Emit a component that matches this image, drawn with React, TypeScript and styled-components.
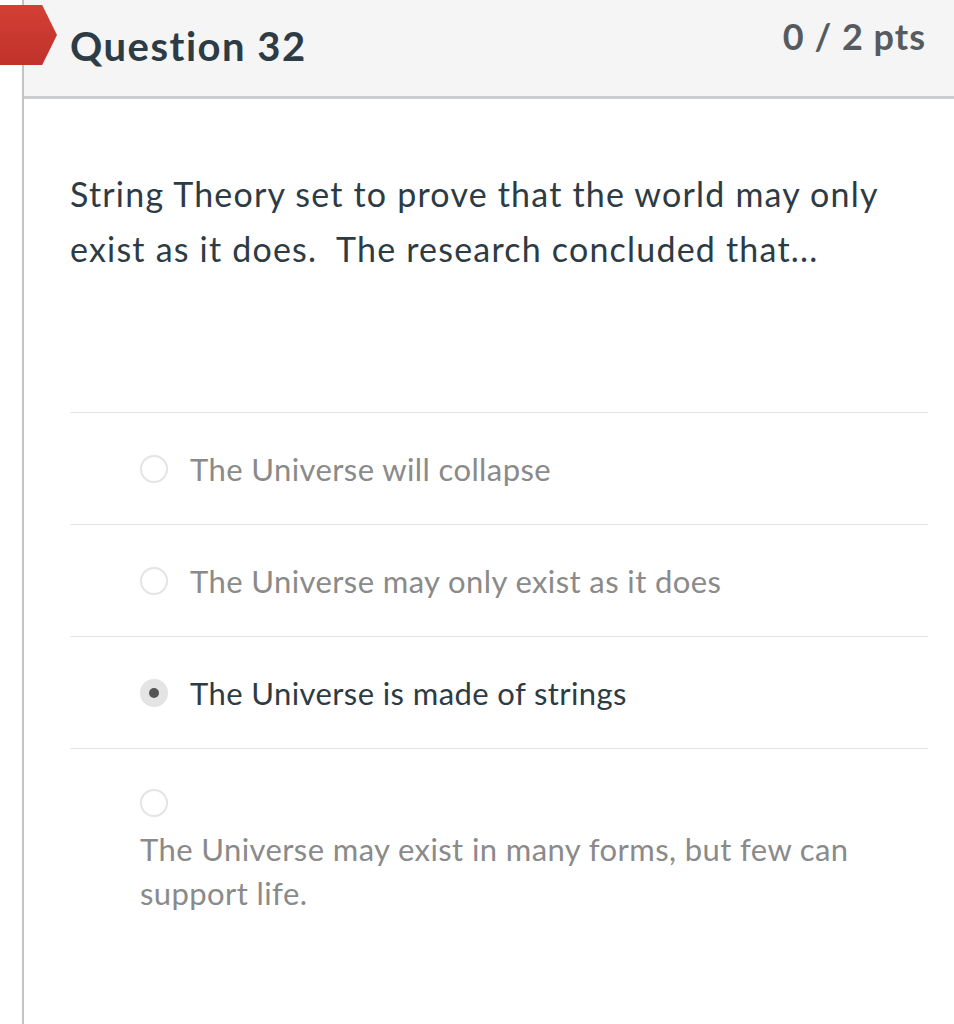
import React from "react";
import styled, { createGlobalStyle } from "styled-components";

const GlobalStyle = createGlobalStyle`
  html, body {
    margin: 0;
    padding: 0;
    background: #ffffff;
    font-family: Lato, "Noto Sans", sans-serif;
  }
`;

const Page = styled.div`
  position: relative;
  padding-left: 22px;
  min-height: 1024px;
  box-sizing: border-box;
`;

const Card = styled.div`
  border-left: 2px solid #c4c4c4;
  min-height: 1024px;
`;

const Header = styled.div`
  display: flex;
  align-items: center;
  justify-content: space-between;
  height: 96px;
  padding: 0 28px 0 46px;
  background: #f5f5f5;
  border-bottom: 3px solid #c9cdd0;
`;

const Flag = styled.div`
  position: absolute;
  left: 0;
  top: 5px;
  width: 57px;
  height: 60px;
  background: linear-gradient(180deg, #d33f35 0%, #c0322a 100%);
  clip-path: polygon(0 0, 74% 0, 100% 50%, 74% 100%, 0 100%);
`;

const Title = styled.h2`
  margin: 0;
  font-size: 40px;
  letter-spacing: 1.5px;
  font-weight: 700;
  color: #2d3b45;
  padding-bottom: 4px;
`;

const Points = styled.div`
  font-size: 36px;
  letter-spacing: 1px;
  font-weight: 700;
  color: #555b60;
  padding-bottom: 24px;
`;

const Body = styled.div`
  padding: 67px 26px 0 46px;
`;

const Prompt = styled.p`
  margin: 0 0 136px;
  font-size: 34px;
  letter-spacing: 1.2px;
  line-height: 55px;
  color: #2d3b45;
`;

const Answer = styled.div<{ $stacked?: boolean }>`
  display: flex;
  flex-direction: ${(p) => (p.$stacked ? "column" : "row")};
  align-items: ${(p) => (p.$stacked ? "flex-start" : "center")};
  gap: ${(p) => (p.$stacked ? "10px" : "22px")};
  min-height: ${(p) => (p.$stacked ? "auto" : "111px")};
  padding: ${(p) => (p.$stacked ? "40px 0 0 70px" : "0 0 0 70px")};
  border-top: 1px solid #e4e4e4;
`;

const Radio = styled.span<{ $checked?: boolean }>`
  display: inline-flex;
  align-items: center;
  justify-content: center;
  width: 28px;
  height: 28px;
  box-sizing: border-box;
  border-radius: 50%;
  border: 2px solid #e4e4e4;
  background: ${(p) => (p.$checked ? "#e4e4e4" : "#fff")};
  flex-shrink: 0;

  &::after {
    content: "";
    display: ${(p) => (p.$checked ? "block" : "none")};
    width: 10px;
    height: 10px;
    border-radius: 50%;
    background: #555;
  }
`;

const Label = styled.span<{ $checked?: boolean }>`
  font-size: 31px;
  letter-spacing: 0.4px;
  line-height: 44px;
  color: ${(p) => (p.$checked ? "#2d3b45" : "#8a8a8a")};
`;

const answers = [
  { text: "The Universe will collapse" },
  { text: "The Universe may only exist as it does" },
  { text: "The Universe is made of strings", checked: true },
];

export default function App() {
  return (
    <>
      <GlobalStyle />
      <Page>
        <Flag />
        <Card>
          <Header>
            <Title>Question 32</Title>
            <Points>0 / 2 pts</Points>
          </Header>
          <Body>
            <Prompt>
              String Theory set to prove that the world may only
              <br />
              exist as it does.&nbsp; The research concluded that...
            </Prompt>
            {answers.map((a) => (
              <Answer key={a.text}>
                <Radio $checked={a.checked} />
                <Label $checked={a.checked}>{a.text}</Label>
              </Answer>
            ))}
            <Answer $stacked>
              <Radio />
              <Label>
                The Universe may exist in many forms, but few can
                <br />
                support life.
              </Label>
            </Answer>
          </Body>
        </Card>
      </Page>
    </>
  );
}
